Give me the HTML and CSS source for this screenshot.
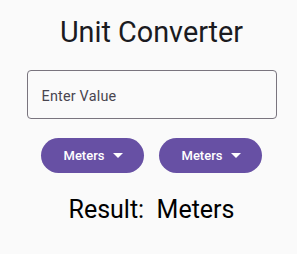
FILE: index.html
```html
<!DOCTYPE html>
<html lang="en">
<head>
<meta charset="UTF-8">
<meta name="viewport" content="width=device-width, initial-scale=1.0">
<title>Unit Converter</title>
<link rel="stylesheet" href="styles.css">
</head>
<body>

<div class="container">
  <div class="title">Unit Converter</div>
  <div class="field">
    <input type="text" class="value-input" placeholder="Enter Value">
  </div>
  <div class="units">
    <button class="unit-button">Meters
      <svg class="arrow" width="10" height="5" viewBox="0 0 10 5"><path d="M0 0 L10 0 L5 5 Z" fill="#fff"/></svg>
    </button>
    <button class="unit-button">Meters
      <svg class="arrow" width="10" height="5" viewBox="0 0 10 5"><path d="M0 0 L10 0 L5 5 Z" fill="#fff"/></svg>
    </button>
  </div>
  <div class="result">Result:&nbsp; Meters</div>
</div>

</body>
</html>
```

FILE: styles.css
```css
body {
  margin: 0;
  font-family: Roboto, "Liberation Sans", sans-serif;
  background-color: #fafafa;
}
.container {
  display: flex;
  flex-direction: column;
  align-items: center;
  padding: 14px 0 0 6px;
}
.title {
  font-size: 28.8px;
  color: #1b1b1f;
  line-height: 36px;
}
.field {
  margin-top: 20px;
  width: 250px;
  height: 49px;
  box-sizing: border-box;
  border: 1px solid #79747e;
  border-radius: 4px;
  display: flex;
  align-items: center;
}
.value-input {
  border: none;
  outline: none;
  background: transparent;
  font-family: inherit;
  font-size: 14.4px;
  padding: 3px 0 0 14px;
  width: 100%;
  color: #1c1b1f;
}
.value-input::placeholder {
  color: #49454f;
  letter-spacing: 0.2px;
}
.units {
  display: flex;
  gap: 15px;
  margin-top: 19px;
}
.unit-button {
  width: 103px;
  height: 35px;
  border: none;
  border-radius: 18px;
  background-color: #6750a4;
  color: #fff;
  font-family: inherit;
  font-size: 13px;
  font-weight: 500;
  display: flex;
  align-items: center;
  justify-content: center;
  gap: 9px;
  padding: 0 0 0 2px;
  cursor: pointer;
}
.result {
  margin-top: 22px;
  font-size: 25px;
  color: #000;
}
```
